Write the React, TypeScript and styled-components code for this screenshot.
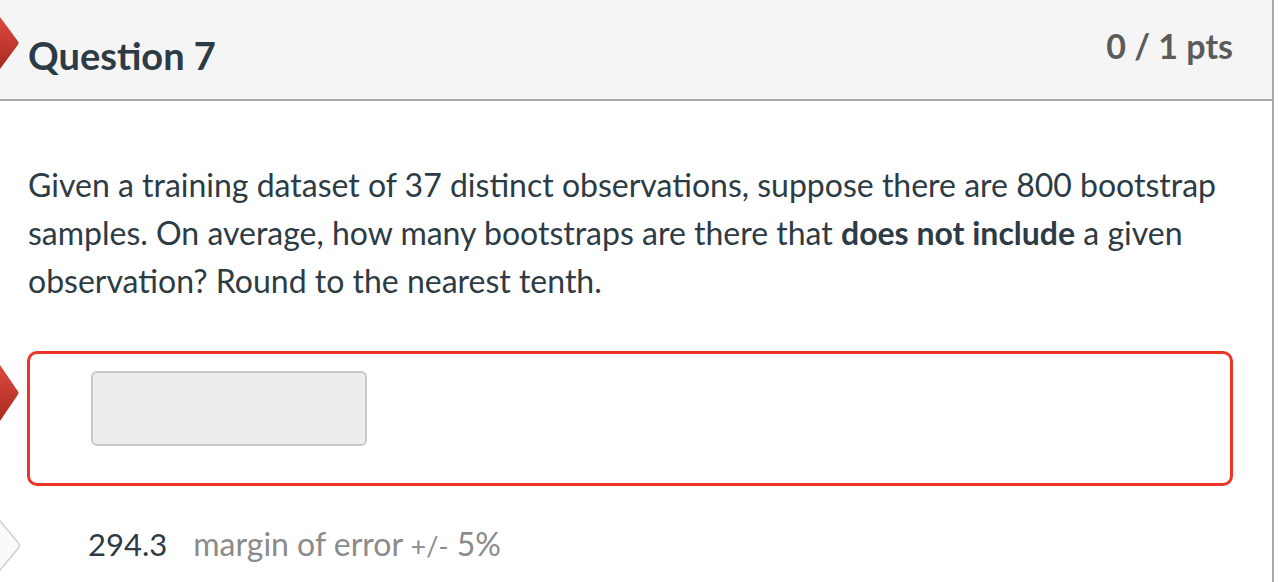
import { createGlobalStyle, styled } from "styled-components";

const GlobalStyle = createGlobalStyle`
  *, *::before, *::after {
    box-sizing: border-box;
  }
  html, body {
    margin: 0;
    padding: 0;
    background: #ffffff;
  }
  body {
    font-family: Lato, "Liberation Sans", Arial, sans-serif;
    color: #2d3b45;
    overflow: hidden;
  }
`;

const Card = styled.div`
  position: relative;
  width: 1274px;
  height: 582px;
  border-right: 2px solid #a9a9a9;
  background: #ffffff;
`;

const Header = styled.div`
  display: flex;
  justify-content: space-between;
  align-items: flex-start;
  height: 101px;
  padding: 0 39px 0 28px;
  background: #f5f5f5;
  border-bottom: 2px solid #a9a9a9;
`;

const Title = styled.h2`
  margin: 32px 0 0;
  font-size: 38px;
  font-weight: 700;
  line-height: 46px;
  color: #2d3b45;
`;

const Points = styled.div`
  margin-top: 26px;
  font-size: 34px;
  font-weight: 700;
  line-height: 40px;
  color: #5b5b5b;
`;

const Body = styled.div`
  padding: 60px 0 0 28px;
`;

const QuestionText = styled.p`
  margin: 0;
  width: 1200px;
  font-size: 32px;
  line-height: 48px;
  color: #2d3b45;

  strong {
    font-weight: 700;
  }
`;

const AnswerBox = styled.div`
  margin: 46px 0 0 -1px;
  width: 1206px;
  height: 135px;
  border: 3px solid #ec3526;
  border-radius: 10px;
  padding: 17px 0 0 61px;
`;

const Input = styled.div`
  width: 276px;
  height: 75px;
  background: #ededed;
  border: 2px solid #c9c9c9;
  border-radius: 6px;
`;

const CorrectRow = styled.div`
  display: flex;
  align-items: baseline;
  gap: 26px;
  margin: 38px 0 0 60px;
  font-size: 31px;
  line-height: 40px;
`;

const Answer = styled.span`
  color: #2d3b45;
`;

const Margin = styled.span`
  font-size: 32px;
  color: #8b8b8b;

  small {
    font-size: 27px;
  }
`;

const Arrow = styled.svg<{ $top: number }>`
  position: absolute;
  left: 0;
  top: ${(p) => p.$top}px;
`;

function RedArrow({ top, h }: { top: number; h: number }) {
  const mid = h / 2;
  return (
    <Arrow $top={top} width="24" height={h} viewBox={`0 0 24 ${h}`}>
      <defs>
        <linearGradient id={`red${top}`} x1="0" y1="0" x2="0" y2="1">
          <stop offset="0" stopColor="#dc4a3f" />
          <stop offset="1" stopColor="#a92a20" />
        </linearGradient>
      </defs>
      <path
        d={`M0 0 L17 ${mid - 3} Q20 ${mid} 17 ${mid + 3} L0 ${h} Z`}
        fill={`url(#red${top})`}
      />
    </Arrow>
  );
}

function GrayArrow({ top, h }: { top: number; h: number }) {
  const mid = h / 2;
  return (
    <Arrow $top={top} width="24" height={h} viewBox={`0 0 24 ${h}`}>
      <path
        d={`M-2 0.5 L18 ${mid - 3} Q21 ${mid} 18 ${mid + 3} L-2 ${h - 0.5}`}
        fill="#fafafa"
        stroke="#cfcfcf"
        strokeWidth="1.5"
      />
    </Arrow>
  );
}

export default function App() {
  return (
    <>
      <GlobalStyle />
      <Card>
        <Header>
          <Title>Question 7</Title>
          <Points>0 / 1 pts</Points>
        </Header>
        <Body>
          <QuestionText>
            Given a training dataset of 37 distinct observations, suppose there are 800 bootstrap
            samples. On average, how many bootstraps are there that <strong>does not include</strong> a
            given observation? Round to the nearest tenth.
          </QuestionText>
          <AnswerBox>
            <Input />
          </AnswerBox>
          <CorrectRow>
            <Answer>294.3</Answer>
            <Margin>
              margin of error <small>+/-</small> 5%
            </Margin>
          </CorrectRow>
        </Body>
        <RedArrow top={17} h={52} />
        <RedArrow top={365} h={56} />
        <GrayArrow top={518} h={55} />
      </Card>
    </>
  );
}
